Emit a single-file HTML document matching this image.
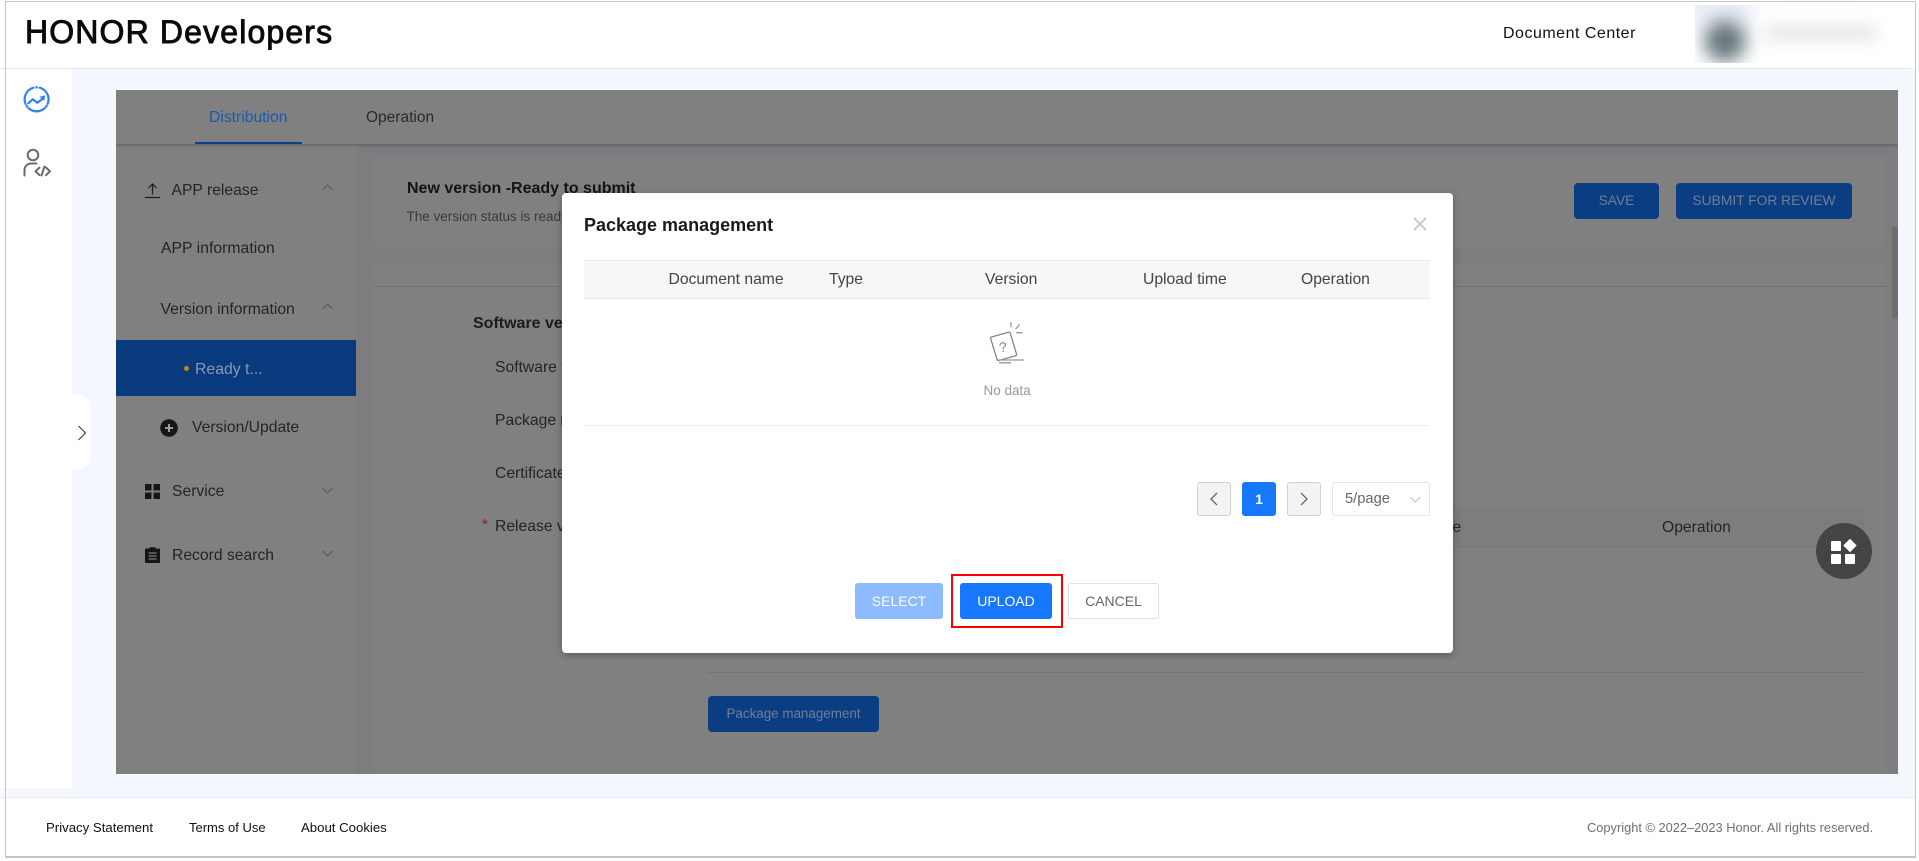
<!DOCTYPE html>
<html lang="en"><head><meta charset="utf-8"><title>HONOR Developers</title>
<style>
html,body{margin:0;padding:0;width:1919px;height:861px;overflow:hidden;background:#fff;font-family:"Liberation Sans",Arial,sans-serif}
div,span{position:absolute;box-sizing:border-box}
.t{white-space:nowrap;line-height:20px;height:20px}
svg{position:absolute;overflow:visible}
.g{color:#242424;font-size:15.7px}
</style></head><body>
<!-- base -->
<div style="left:72px;top:69px;width:1843px;height:728px;background:#f4f7fe"></div>
<div style="left:0;top:788px;width:72px;height:9px;background:#f6f8fd"></div>
<div style="left:0;top:68px;width:1911px;height:1px;background:#e3e5ea"></div>
<div style="left:0;top:797px;width:1915px;height:1px;background:#e9ebf0"></div>
<div style="left:5px;top:1px;width:1911px;height:857px;border:1px solid #c4c4c4;border-width:1px 1px 2px 1px"></div>

<!-- header -->
<div class="t" style="left:25px;top:12px;height:40px;line-height:40px;font-size:32px;color:#0a0a0a;letter-spacing:1.15px;-webkit-text-stroke:.9px #0a0a0a">HONOR Developers</div>
<div class="t" style="left:1503px;top:24px;font-size:16px;color:#111;letter-spacing:.5px">Document Center</div>
<div style="left:1695px;top:5px;width:195px;height:58px;overflow:hidden;background:#fff">
  <div style="left:-8px;top:-14px;width:66px;height:34px;background:#e9eef7;filter:blur(9px)"></div>
  <div style="left:9px;top:15px;width:42px;height:42px;border-radius:50%;background:#65767c;filter:blur(9px)"></div>
  <div style="left:70px;top:21px;width:112px;height:14px;background:#e4e4e4;filter:blur(8px)"></div>
</div>

<!-- left rail icons -->
<svg style="left:22px;top:85px" width="28" height="28" viewBox="0 0 28 28" fill="none" stroke="#2f80f5" stroke-width="2.200" stroke-linecap="round" stroke-linejoin="round">
  <path d="M17.700 2.700A12 12 0 0 1 25.600 19M22.800 23.100A12 12 0 0 1 6.400 23.100M3.600 19A12 12 0 0 1 11.500 2.700"/>
  <path d="M6.300 18.300l4.400-4 4.600 3.400 6-4.400"/>
  <path d="M17.500 11.800l5.600-1.300-.8 5.400z" fill="#2f80f5" stroke="none"/>
  <circle cx="14.600" cy="2.300" r="1.300" fill="#2f80f5" stroke="none"/><circle cx="4.800" cy="21.200" r="1.300" fill="#2f80f5" stroke="none"/><circle cx="24.400" cy="21.200" r="1.300" fill="#2f80f5" stroke="none"/>
</svg>
<svg style="left:22px;top:148px" width="30" height="30" viewBox="0 0 30 30" fill="none" stroke="#6a6a6a" stroke-width="2" stroke-linecap="round" stroke-linejoin="round">
  <circle cx="11" cy="7" r="5.300"/>
  <path d="M2.500 27.500v-5c0-4.500 3-7 7-7h5"/>
  <path d="M17.500 19.500l-4 3.800 4 3.800M24 19.500l4 3.800-4 3.800M22.500 18.500l-3 9"/>
</svg>

<!-- collapse tab -->
<div style="left:72px;top:394px;width:18px;height:76px;background:#fff;border-radius:0 13px 13px 0"></div>
<svg style="left:77px;top:425px" width="11" height="16" viewBox="0 0 11 16" fill="none" stroke="#3a2a44" stroke-width="1"><path d="M1.500 1l7 7-7 7"/></svg>

<!-- gray content -->
<div id="c" style="left:116px;top:90px;width:1782px;height:684px;background:#808080;overflow:hidden">
  <div style="left:0;top:0;width:1782px;height:54px;background:#808080;box-shadow:0 1px 4px rgba(0,0,0,.28);z-index:2"></div>
  <div style="left:240px;top:54px;width:1542px;height:630px;background:#7d7d80"></div>
  <div style="left:258px;top:65px;width:1512px;height:92px;background:#808080;border-radius:4px"></div>
  <div style="left:258px;top:175px;width:1512px;height:509px;background:#808080"></div>
  <div style="left:258px;top:196px;width:1512px;height:1px;background:#727272"></div>
  <div style="left:1776px;top:136px;width:6px;height:93px;background:#6e6e6e;border-radius:3px"></div>
  <div style="left:0;top:54px;width:240px;height:630px;background:#808080"></div>
</div>
<div style="left:195px;top:142px;width:107px;height:2px;background:#0b3f8f;z-index:3"></div>
<div class="t" style="left:209px;top:108px;font-size:15.700px;color:#1c58ae;z-index:3">Distribution</div>
<div class="t" style="left:366px;top:108px;font-size:15.500px;color:#2a2a2a;z-index:3">Operation</div>

<!-- side menu -->
<svg style="left:144px;top:182px" width="17" height="17" viewBox="0 0 17 17" fill="none" stroke="#1c1c1c" stroke-width="1.200"><path d="M1 15.500h15M8.500 12.500V2M4.500 6l4-4 4 4"/></svg>
<div class="t g" style="left:171.500px;top:181px">APP release</div>
<svg style="left:322px;top:184px" width="11" height="7" viewBox="0 0 11 7" fill="none" stroke="#555" stroke-width="1"><path d="M.5 6l5-5 5 5"/></svg>
<div class="t g" style="left:161px;top:239px;letter-spacing:.05px">APP information</div>
<div class="t g" style="left:160.500px;top:300px">Version information</div>
<svg style="left:322px;top:303px" width="11" height="7" viewBox="0 0 11 7" fill="none" stroke="#555" stroke-width="1"><path d="M.5 6l5-5 5 5"/></svg>
<div style="left:116px;top:340px;width:240px;height:56px;background:#0a3a7e"></div>
<div style="left:184px;top:366px;width:5px;height:5px;border-radius:50%;background:#c08a06"></div>
<div class="t" style="left:195px;top:360px;font-size:15.800px;color:#8b99ad">Ready t...</div>
<svg style="left:160px;top:419px" width="18" height="18" viewBox="0 0 18 18"><circle cx="9" cy="9" r="8.800" fill="#161616"/><path d="M9 5v8M5 9h8" stroke="#a8a8a8" stroke-width="1.800"/></svg>
<div class="t g" style="left:192px;top:418px">Version/Update</div>
<svg style="left:145px;top:484px" width="15" height="15" viewBox="0 0 15 15" fill="#161616"><rect width="6.500" height="6.500"/><rect x="8.500" width="6.500" height="6.500"/><rect y="8.500" width="6.500" height="6.500"/><rect x="8.500" y="8.500" width="6.500" height="6.500"/></svg>
<div class="t g" style="left:172px;top:482px">Service</div>
<svg style="left:322px;top:487px" width="11" height="7" viewBox="0 0 11 7" fill="none" stroke="#555" stroke-width="1"><path d="M.5 1l5 5 5-5"/></svg>
<svg style="left:145px;top:546px" width="15" height="17" viewBox="0 0 15 17"><path d="M1 2.500h3.500V1.200h6v1.300H14a1 1 0 0 1 1 1V16a1 1 0 0 1-1 1H1a1 1 0 0 1-1-1V3.500a1 1 0 0 1 1-1z" fill="#161616"/><path d="M3.500 7h8M3.500 10h8M3.500 13h8" stroke="#808080" stroke-width="1.200"/></svg>
<div class="t g" style="left:172px;top:546px">Record search</div>
<svg style="left:322px;top:550px" width="11" height="7" viewBox="0 0 11 7" fill="none" stroke="#555" stroke-width="1"><path d="M.5 1l5 5 5-5"/></svg>

<!-- behind-modal content -->
<div class="t" style="left:407px;top:179px;font-size:16px;font-weight:bold;color:#141414">New version -Ready to submit</div>
<div class="t" style="left:406.500px;top:207px;font-size:13.500px;color:#3a3a3a">The version status is ready to submit</div>
<div style="left:1574px;top:183px;width:85px;height:36px;background:#0b3d82;border-radius:4px;text-align:center;line-height:36px;font-size:13.800px;color:#6f7f96">SAVE</div>
<div style="left:1676px;top:183px;width:176px;height:36px;background:#0b3d82;border-radius:4px;text-align:center;line-height:36px;font-size:13.800px;color:#6f7f96">SUBMIT FOR REVIEW</div>
<div class="t" style="left:473px;top:314px;font-size:16px;font-weight:bold;color:#1c1c1c">Software version</div>
<div class="t g" style="left:495px;top:358px">Software type</div>
<div class="t g" style="left:495px;top:411px">Package name</div>
<div class="t g" style="left:495px;top:464px">Certificate</div>
<div class="t" style="left:482px;top:515px;font-size:15px;color:#8f2020">*</div>
<div class="t g" style="left:495px;top:517px">Release version</div>
<div style="left:1453px;top:508px;width:411px;height:39px;background:#7d7d7d;border-bottom:1px solid #767676"></div>
<div class="t g" style="left:1444px;top:518px;width:100px"><span style="position:static;margin-left:8.500px">e</span></div>
<div class="t g" style="left:1662px;top:518px">Operation</div>
<div style="left:708px;top:672px;width:1156px;height:1px;background:#747478"></div>
<div style="left:708px;top:696px;width:171px;height:36px;background:#0b3d82;border-radius:4px;text-align:center;line-height:36px;font-size:13.400px;color:#6f7f96">Package management</div>

<!-- modal -->
<div style="left:562px;top:193px;width:891px;height:460px;background:#fff;border-radius:4px;box-shadow:0 2px 8px rgba(0,0,0,.3);z-index:5;overflow:hidden">
  <div class="t" style="left:22px;top:22px;font-size:18px;font-weight:bold;color:#1a1a1a;height:20px">Package management</div>
  <svg style="left:851px;top:24px" width="14" height="14" viewBox="0 0 14 14" stroke="#c9c9c9" stroke-width="2"><path d="M1 1l12 12M13 1L1 13"/></svg>
  <div style="left:22px;top:67px;width:846px;height:39px;background:#f7f7f7;border-top:1px solid #e8e8ee;border-bottom:1px solid #e8e8ee"></div>
  <div class="t" style="left:106.500px;top:77px;font-size:15.700px;color:#444">Document name</div>
  <div class="t" style="left:267px;top:77px;font-size:15.700px;color:#444">Type</div>
  <div class="t" style="left:423px;top:77px;font-size:15.700px;color:#444">Version</div>
  <div class="t" style="left:581px;top:77px;font-size:15.700px;color:#444">Upload time</div>
  <div class="t" style="left:739px;top:77px;font-size:15.700px;color:#444">Operation</div>
  <svg style="left:398px;top:117px" width="70" height="60" viewBox="0 0 70 60" fill="none" stroke="#858585" stroke-width="1.300" stroke-linecap="round" stroke-linejoin="round">
    <path d="M31.500 27l17-4.800q1.300-.3 1.700.9l6.300 20.900q.4 1.300-.9 1.700L38.800 50.500q-1.300.3-1.700-.9L30.700 28.700q-.4-1.300.8-1.700z"/>
    <path d="M37.500 50h26M39.500 52.800h11.200" stroke="#999"/>
    <path d="M51 12.700v4M59.300 14.700l-3.300 4M56.700 22.700h5.300" stroke="#999"/>
  </svg>
  <div class="t" style="left:436.500px;top:144px;font-size:14px;color:#888;z-index:1;transform:rotate(-8deg)">?</div>
  <div class="t" style="left:421.500px;top:188px;font-size:13.500px;color:#999">No data</div>
  <div style="left:22px;top:232px;width:846px;height:1px;background:#ebebf0"></div>
  <div style="left:635px;top:289px;width:34px;height:34px;background:#f3f3f3;border:1px solid #d2d2d2;border-radius:3px"></div>
  <svg style="left:647px;top:299px" width="9" height="14" viewBox="0 0 9 14" fill="none" stroke="#555" stroke-width="1.200"><path d="M8 1L2 7l6 6"/></svg>
  <div style="left:680px;top:289px;width:34px;height:34px;background:#1677ff;border-radius:3px;text-align:center;line-height:34px;color:#fff;font-size:14px;font-weight:bold">1</div>
  <div style="left:725px;top:289px;width:34px;height:34px;background:#f3f3f3;border:1px solid #d2d2d2;border-radius:3px"></div>
  <svg style="left:738px;top:299px" width="9" height="14" viewBox="0 0 9 14" fill="none" stroke="#555" stroke-width="1.200"><path d="M1 1l6 6-6 6"/></svg>
  <div style="left:770px;top:289px;width:98px;height:34px;background:#fff;border:1px solid #e3e3e8;border-radius:3px"></div>
  <div class="t" style="left:783px;top:296px;font-size:14.700px;color:#666">5/page</div>
  <svg style="left:848px;top:303px" width="11" height="7" viewBox="0 0 11 7" fill="none" stroke="#c4c4c4" stroke-width="1"><path d="M.5 1l5 5 5-5"/></svg>
  <div style="left:293px;top:390px;width:88px;height:36px;background:#8dbbff;border-radius:3px;text-align:center;line-height:36px;color:#fff;font-size:14px">SELECT</div>
  <div style="left:398px;top:390px;width:92px;height:36px;background:#1677ff;border-radius:3px;text-align:center;line-height:36px;color:#fff;font-size:14px">UPLOAD</div>
  <div style="left:506px;top:390px;width:91px;height:36px;background:#fff;border:1px solid #dfdfe6;border-radius:3px;text-align:center;line-height:34px;color:#666;font-size:14px">CANCEL</div>
  <div style="left:389px;top:381px;width:112px;height:54px;border:2px solid #f00"></div>
</div>

<!-- float button -->
<div style="left:1816px;top:523px;width:56px;height:56px;border-radius:50%;background:#444;z-index:6"></div>
<svg style="left:1830px;top:537px;z-index:7" width="28" height="28" viewBox="0 0 28 28" fill="#fff"><rect x="1" y="4" width="10" height="10" rx="1"/><rect x="1" y="17" width="10" height="10" rx="1"/><rect x="15" y="17" width="10" height="10" rx="1"/><path d="M20 1.800l6.700 6.700-6.700 6.700-6.700-6.700z"/></svg>

<!-- footer -->
<div class="t" style="left:46px;top:818px;font-size:13.200px;color:#111">Privacy Statement</div>
<div class="t" style="left:189px;top:818px;font-size:13px;color:#111">Terms of Use</div>
<div class="t" style="left:301px;top:818px;font-size:13.200px;color:#111">About Cookies</div>
<div class="t" style="left:1587px;top:818px;font-size:12.830px;color:#6e6e78">Copyright © 2022–2023 Honor. All rights reserved.</div>
</body></html>
